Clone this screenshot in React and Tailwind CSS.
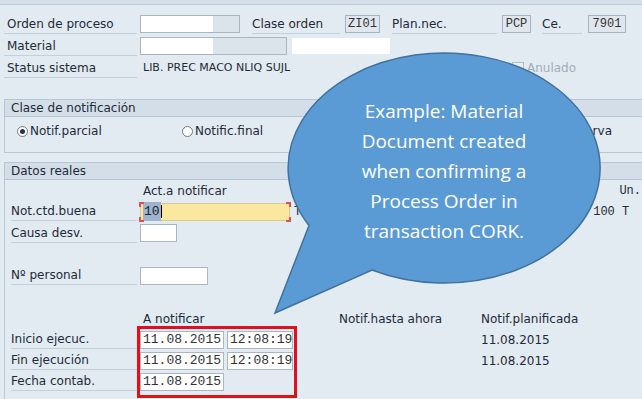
import React from 'react';

const sap = { fontFamily: '"DejaVu Sans", Verdana, sans-serif' };
const mono = { fontFamily: '"Liberation Mono", "Courier New", monospace' };

function Label({ w, children, className = '' }) {
    return (
        <div
            className={`h-[19px] flex items-center border-b border-[#c3cfdb] text-[12px] text-[#1f2b37] whitespace-nowrap ${className}`}
            style={{ width: w }}
        >
            {children}
        </div>
    );
}

function Box({ w, children, className = '' }) {
    return (
        <div
            className={`h-[18px] flex items-center justify-center border border-[#a6b3c0] bg-[#dfe6ed] text-[12px] text-[#333] ${className}`}
            style={{ width: w, ...mono }}
        >
            {children}
        </div>
    );
}

function Input({ w, children, className = '' }) {
    return (
        <div
            className={`h-[18px] flex items-center px-[2px] border border-[#aab6c2] bg-white text-[13px] text-[#333] ${className}`}
            style={{ width: w, ...mono }}
        >
            {children}
        </div>
    );
}

function Radio({ checked, label }) {
    return (
        <div className="flex items-center gap-[2px] text-[12px] text-[#1f2b37]">
            <span className="w-[11px] h-[11px] rounded-full border border-[#6d7b88] bg-white flex items-center justify-center">
                {checked && <span className="w-[5px] h-[5px] rounded-full bg-[#2a3440]"></span>}
            </span>
            {label}
        </div>
    );
}

function GroupHeader({ children }) {
    return (
        <div className="h-[17px] flex items-center pl-[6px] bg-[#d3dee9] border-b border-[#b7c6d5] text-[12px] text-[#1f2b37]">
            {children}
        </div>
    );
}

export default function App() {
    return (
        <div className="relative w-[642px] h-[399px] overflow-hidden bg-[#e2eaf2]" style={sap}>
            {/* barra superior */}
            <div className="h-[5px] bg-[#d5dfe9] border-b border-[#bccbd9]"></div>

            {/* cabecera */}
            <div className="pt-[8px] pl-[4px]">
                <div className="h-[22px] flex items-center">
                    <Label w="133px" className="pl-[3px]">Orden de proceso</Label>
                    <div className="ml-[3px] h-[18px] w-[100px] flex border border-[#aab6c2]">
                        <div className="w-[72px] bg-white"></div>
                        <div className="flex-1 bg-[#dbe3eb]"></div>
                    </div>
                    <Label w="88px" className="ml-[12px]">Clase orden</Label>
                    <Box w="35px" className="ml-[5px]">ZI01</Box>
                    <Label w="105px" className="ml-[12px]">Plan.nec.</Label>
                    <Box w="29px" className="ml-[5px]">PCP</Box>
                    <Label w="40px" className="ml-[11px]">Ce.</Label>
                    <Box w="38px" className="ml-[6px]">7901</Box>
                </div>
                <div className="h-[22px] flex items-center">
                    <Label w="133px" className="pl-[3px]">Material</Label>
                    <div className="ml-[3px] h-[18px] w-[147px] flex border border-[#aab6c2]">
                        <div className="w-[72px] bg-white"></div>
                        <div className="flex-1 bg-[#dbe3eb]"></div>
                    </div>
                    <div className="ml-[5px] h-[16px] w-[98px] bg-white"></div>
                </div>
                <div className="h-[22px] flex items-center">
                    <Label w="133px" className="pl-[3px]">Status sistema</Label>
                    <div className="ml-[6px] w-[369px] text-[11px] text-[#1f2b37]">LIB. PREC MACO NLIQ SUJL</div>
                    <div className="flex items-center gap-[3px] text-[12px] text-[#a3adb7]">
                        <span className="w-[12px] h-[12px] border border-[#b3bcc5] bg-[#e8eef4]"></span>
                        Anulado
                    </div>
                </div>
            </div>

            {/* Clase de notificación */}
            <div className="mt-[20px] ml-[4px] h-[54px] border border-r-0 border-[#b7c6d5]">
                <GroupHeader>Clase de notificación</GroupHeader>
                <div className="h-[28px] flex items-center pl-[12px] pr-[30px]">
                    <div className="w-[165px]">
                        <Radio checked label="Notif.parcial" />
                    </div>
                    <Radio label="Notific.final" />
                    <div className="ml-auto text-[12px] text-[#1f2b37]">Compens.reserva</div>
                </div>
            </div>

            {/* Datos reales */}
            <div className="mt-[9px] ml-[4px] h-[260px] border border-r-0 border-[#b7c6d5]">
                <GroupHeader>Datos reales</GroupHeader>
                <div className="text-[12px] text-[#1f2b37]">
                    <div className="h-[21px] flex items-center pl-[138px] pr-[1px]">
                        Act.a notificar
                        <span className="ml-auto text-[12px]" style={mono}>Un.</span>
                    </div>
                    <div className="h-[21px] flex items-center pl-[6px]">
                        <Label w="126px">Not.ctd.buena</Label>
                        <div className="relative ml-[3px] h-[18px] w-[150px] flex items-center px-[2px] bg-[#fbe7a0] border border-[#d8c98d] text-[13px]" style={mono}>
                            <span className="bg-[#9fb3cc] text-[#1b2430] px-[1px]">10</span>
                            <span className="w-[1px] h-[13px] bg-black"></span>
                            <span className="absolute -left-[2px] -top-[2px] w-[5px] h-[5px] border-l-2 border-t-2 border-[#d9534f]"></span>
                            <span className="absolute -left-[2px] -bottom-[2px] w-[5px] h-[5px] border-l-2 border-b-2 border-[#d9534f]"></span>
                            <span className="absolute -right-[2px] -top-[2px] w-[5px] h-[5px] border-r-2 border-t-2 border-[#d9534f]"></span>
                            <span className="absolute -right-[2px] -bottom-[2px] w-[5px] h-[5px] border-r-2 border-b-2 border-[#d9534f]"></span>
                        </div>
                        <span className="ml-[4px] text-[12px]" style={mono}>T</span>
                        <span className="ml-[292px] text-[12px]" style={mono}>100 T</span>
                    </div>
                    <div className="h-[22px] flex items-center pl-[6px]">
                        <Label w="126px">Causa desv.</Label>
                        <Input w="37px" className="ml-[3px]"></Input>
                    </div>
                    <div className="h-[21px]"></div>
                    <div className="h-[21px] flex items-center pl-[6px]">
                        <Label w="126px">Nº personal</Label>
                        <Input w="68px" className="ml-[3px]"></Input>
                    </div>
                    <div className="h-[22px]"></div>
                    <div className="h-[21px] flex items-center pl-[138px]">
                        <span className="w-[196px]">A notificar</span>
                        <span className="w-[142px]">Notif.hasta ahora</span>
                        <span>Notif.planificada</span>
                    </div>
                    <div className="h-[21px] flex items-center pl-[6px]">
                        <Label w="126px">Inicio ejecuc.</Label>
                        <Input w="84px" className="ml-[3px]">11.08.2015</Input>
                        <Input w="66px" className="ml-[3px]">12:08:19</Input>
                        <span className="ml-[188px]">11.08.2015</span>
                    </div>
                    <div className="h-[21px] flex items-center pl-[6px]">
                        <Label w="126px">Fin ejecución</Label>
                        <Input w="84px" className="ml-[3px]">11.08.2015</Input>
                        <Input w="66px" className="ml-[3px]">12:08:19</Input>
                        <span className="ml-[188px]">11.08.2015</span>
                    </div>
                    <div className="h-[21px] flex items-center pl-[6px]">
                        <Label w="126px">Fecha contab.</Label>
                        <Input w="84px" className="ml-[3px]">11.08.2015</Input>
                    </div>
                </div>
            </div>

            {/* marco rojo de anotación */}
            <div className="absolute left-[137px] top-[326px] w-[160px] h-[72px] border-[3px] border-[#e3101a]"></div>

            {/* bocadillo */}
            <svg className="absolute left-0 top-0" width="642" height="399" viewBox="0 0 642 399">
                <path
                    d="M 309 225.5 L 275 313 L 372 270 A 156 115 0 1 0 309 225.5 Z"
                    fill="#5b9bd5"
                    stroke="#41719c"
                    strokeWidth="1.5"
                    strokeLinejoin="miter"
                />
            </svg>
            <div
                className="absolute left-[294px] top-[96px] w-[300px] text-center text-white text-[19px] leading-[30px]"
                style={{ fontFamily: '"Open Sans", "Noto Sans", sans-serif' }}
            >
                Example: Material<br />
                Document created<br />
                when confirming a<br />
                Process Order in<br />
                transaction CORK.
            </div>
        </div>
    );
}
